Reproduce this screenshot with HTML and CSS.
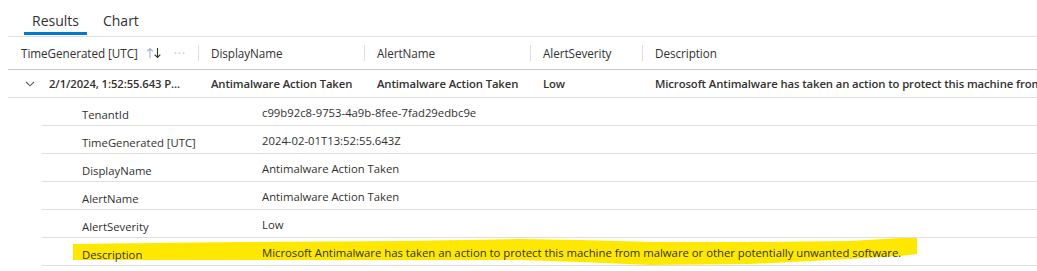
FILE: index.html
```html
<!DOCTYPE html>
<html>
<head>
<meta charset="utf-8">
<link rel="stylesheet" href="styles.css">
</head>
<body>
<div class="page">
  <div class="tabs">
    <div class="tab active">Results</div>
    <div class="tab">Chart</div>
  </div>
  <div class="grid-row header">
    <div class="hcell first">
      <span class="htext">TimeGenerated [UTC]</span>
      <svg class="sort" width="16" height="12" viewBox="0 0 16 12">
        <path d="M4 11V1.5M1.2 4.3L4 1.5L6.8 4.3" fill="none" stroke="#9fb0c8" stroke-width="1.1"/>
        <path d="M11.5 1v9.5M8.7 7.7L11.5 10.5L14.3 7.7" fill="none" stroke="#323130" stroke-width="1.1"/>
      </svg>
      <span class="more">···</span>
    </div>
    <div class="hcell"><span class="htext">DisplayName</span></div>
    <div class="hcell"><span class="htext">AlertName</span></div>
    <div class="hcell"><span class="htext">AlertSeverity</span></div>
    <div class="hcell"><span class="htext">Description</span></div>
  </div>
  <div class="grid-row data">
    <div class="dcell first">
      <svg class="chev" width="10" height="6" viewBox="0 0 10 6"><path d="M1 1L5 4.8L9 1" fill="none" stroke="#605e5c" stroke-width="1.1"/></svg>
      <span>2/1/2024, 1:52:55.643 P...</span>
    </div>
    <div class="dcell">Antimalware Action Taken</div>
    <div class="dcell">Antimalware Action Taken</div>
    <div class="dcell">Low</div>
    <div class="dcell">Microsoft Antimalware has taken an action to protect this machine from malware or other potentially unwanted software.</div>
  </div>
  <div class="details">
    <div class="drow"><div class="key">TenantId</div><div class="val">c99b92c8-9753-4a9b-8fee-7fad29edbc9e</div></div>
    <div class="drow"><div class="key">TimeGenerated [UTC]</div><div class="val">2024-02-01T13:52:55.643Z</div></div>
    <div class="drow"><div class="key">DisplayName</div><div class="val">Antimalware Action Taken</div></div>
    <div class="drow"><div class="key">AlertName</div><div class="val">Antimalware Action Taken</div></div>
    <div class="drow"><div class="key">AlertSeverity</div><div class="val">Low</div></div>
    <div class="drow marked">
      <svg class="marker" width="900" height="30" viewBox="0 0 900 30">
        <path d="M31 6 L198 4 L360 3 L478 1 L538 2 L611 4 L708 4 L808 3 L858 0 L875 0 L875 16 L858 18 L808 21 L708 26 L608 27 L538 24 L478 22 L360 22 L198 22 L31 22 Z" fill="#ffe800"/>
      </svg>
      <div class="key">Description</div><div class="val">Microsoft Antimalware has taken an action to protect this machine from malware or other potentially unwanted software.</div>
    </div>
  </div>
</div>
</body>
</html>
```
FILE: styles.css
```css
html, body {
  margin: 0;
  padding: 0;
  background: #ffffff;
}
body {
  font-family: "Open Sans", "Noto Sans", sans-serif;
  color: #323130;
  font-size: 11.3px;
  overflow: hidden;
}
.page {
  margin-left: 8px;
  width: 1029px;
}
.tabs {
  display: flex;
  gap: 8px;
  padding-left: 16px;
  height: 37px;
  border-bottom: 1px solid #e1dfdd;
  box-sizing: border-box;
}
.tab {
  padding: 0 8px;
  font-size: 14px;
  line-height: 20px;
  padding-top: 11px;
  height: 35px;
  box-sizing: border-box;
  color: #323130;
}
.tab.active {
  border-bottom: 3px solid #0078d4;
}
.grid-row {
  display: grid;
  grid-template-columns: 190px 166px 166px 112px 1fr;
}
.header {
  padding: 8px 0;
  border-bottom: 1px solid #c8c6c4;
  height: 33px;
  box-sizing: border-box;
}
.hcell {
  display: flex;
  align-items: center;
  height: 16px;
  border-left: 1px solid #e1dfdd;
  padding-left: 12px;
  white-space: nowrap;
  overflow: hidden;
  font-size: 11.7px;
}
.hcell.first {
  border-left: none;
  padding-left: 13px;
}
.htext {
  letter-spacing: -0.05px;
}
.sort {
  margin-left: 8px;
}
.more {
  margin-left: 12px;
  color: #c8c6c4;
  letter-spacing: 1px;
}
.data {
  height: 28px;
  border-bottom: 1px solid #e1dfdd;
  box-sizing: border-box;
  align-items: center;
  font-weight: 600;
  letter-spacing: -0.1px;
}
.dcell {
  padding-left: 13px;
  white-space: nowrap;
  overflow: hidden;
}
.dcell.first {
  display: flex;
  align-items: center;
  padding-left: 17px;
}
.chev {
  margin-right: 14px;
}
.details {
  margin-left: 34px;
}
.drow {
  display: flex;
  align-items: center;
  height: 28px;
  padding-top: 2px;
  border-bottom: 1px solid #e1dfdd;
  box-sizing: border-box;
  position: relative;
}
.key {
  width: 220px;
  flex: none;
  padding-left: 40px;
  box-sizing: border-box;
  margin-top: 3px;
  position: relative;
}
.val {
  white-space: nowrap;
  position: relative;
}
.marker {
  position: absolute;
  left: 0;
  top: 0;
  overflow: visible;
}
```
